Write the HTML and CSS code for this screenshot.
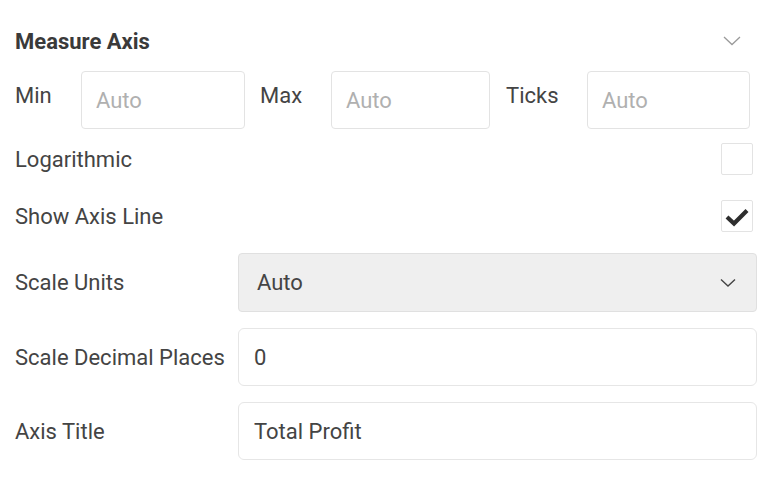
FILE: index.html
```html
<!DOCTYPE html>
<html>
<head>
<meta charset="utf-8">
<link rel="stylesheet" href="styles.css">
</head>
<body>
<div class="panel">
  <div class="header">
    <span class="title">Measure Axis</span>
    <svg class="chev-top" width="18" height="10" viewBox="0 0 18 10"><path d="M1 1 L9 8.5 L17 1" fill="none" stroke="#9a9a9a" stroke-width="1.3"/></svg>
  </div>
  <div class="range-row">
    <div class="pair"><span class="lbl l-min">Min</span><input class="box w164" placeholder="Auto"></div>
    <div class="pair p-max"><span class="lbl l-max">Max</span><input class="box w159" placeholder="Auto"></div>
    <div class="pair p-ticks"><span class="lbl l-ticks">Ticks</span><input class="box w163" placeholder="Auto"></div>
  </div>
  <div class="check-row r-log">
    <span class="lbl">Logarithmic</span>
    <span class="cb"></span>
  </div>
  <div class="check-row r-line">
    <span class="lbl">Show Axis Line</span>
    <span class="cb"><svg width="26" height="20" viewBox="0 0 26 20"><path d="M3 10 L10 16.5 L23 3.5" fill="none" stroke="#2e2e2e" stroke-width="4.2" stroke-linejoin="miter"/></svg></span>
  </div>
  <div class="field-row r-units">
    <span class="flbl">Scale Units</span>
    <div class="select"><span>Auto</span><svg width="16" height="10" viewBox="0 0 16 10"><path d="M1 1.5 L8 8 L15 1.5" fill="none" stroke="#444" stroke-width="1.4"/></svg></div>
  </div>
  <div class="field-row r-dec">
    <span class="flbl">Scale Decimal Places</span>
    <input class="field" value="0">
  </div>
  <div class="field-row r-title">
    <span class="flbl">Axis Title</span>
    <input class="field" value="Total Profit">
  </div>
</div>
</body>
</html>
```
FILE: styles.css
```css
* { box-sizing: border-box; }
html, body { margin: 0; padding: 0; background: #ffffff; }
body { font-family: Roboto, "Liberation Sans", sans-serif; font-size: 22px; color: #444444; }
.panel { padding: 20px 15px 0 15px; width: 772px; }
.header { height: 42px; display: flex; align-items: center; justify-content: space-between; padding-right: 16px; }
.title { font-weight: 700; color: #3a3a3a; font-size: 22px; }
.chev-top { display: block; }
.range-row { margin-top: 9px; display: flex; height: 58px; }
.pair { display: flex; align-items: flex-start; }
.p-max { margin-left: 15px; }
.p-ticks { margin-left: 16px; }
.pair .lbl { padding-top: 12px; flex: none; }
.l-min { width: 66px; }
.l-max { width: 71px; }
.l-ticks { width: 81px; }
.box { height: 58px; border: 1.5px solid #e3e3e3; border-radius: 4px; padding: 0 14px; font: inherit; color: #444; outline: none; background: #fff; }
.box::placeholder { color: #b0b0b0; }
.w164 { width: 164px; }
.w159 { width: 159px; }
.w163 { width: 163px; }
.check-row { display: flex; align-items: center; justify-content: space-between; height: 32px; padding-right: 4px; }
.r-log { margin-top: 14px; }
.r-line { margin-top: 25px; }
.cb { width: 32px; height: 32px; border: 1.5px solid #e3e3e3; border-radius: 2px; display: flex; align-items: center; justify-content: center; }
.cb svg { display: block; margin-top: 1px; }
.field-row { display: flex; align-items: center; height: 58px; }
.r-units { margin-top: 21px; height: 59px; }
.r-dec { margin-top: 16px; }
.r-title { margin-top: 16px; }
.flbl { width: 223px; flex: none; }
.select { flex: 1; height: 59px; background: #efefef; border: 1.5px solid #e0e0e0; border-radius: 4px; display: flex; align-items: center; justify-content: space-between; padding: 0 20px 0 18px; }
.select svg { display: block; }
.field { flex: 1; height: 58px; border: 1.5px solid #e6e6e6; border-radius: 6px; padding: 0 15px; font: inherit; color: #444; outline: none; background: #fff; }
```
